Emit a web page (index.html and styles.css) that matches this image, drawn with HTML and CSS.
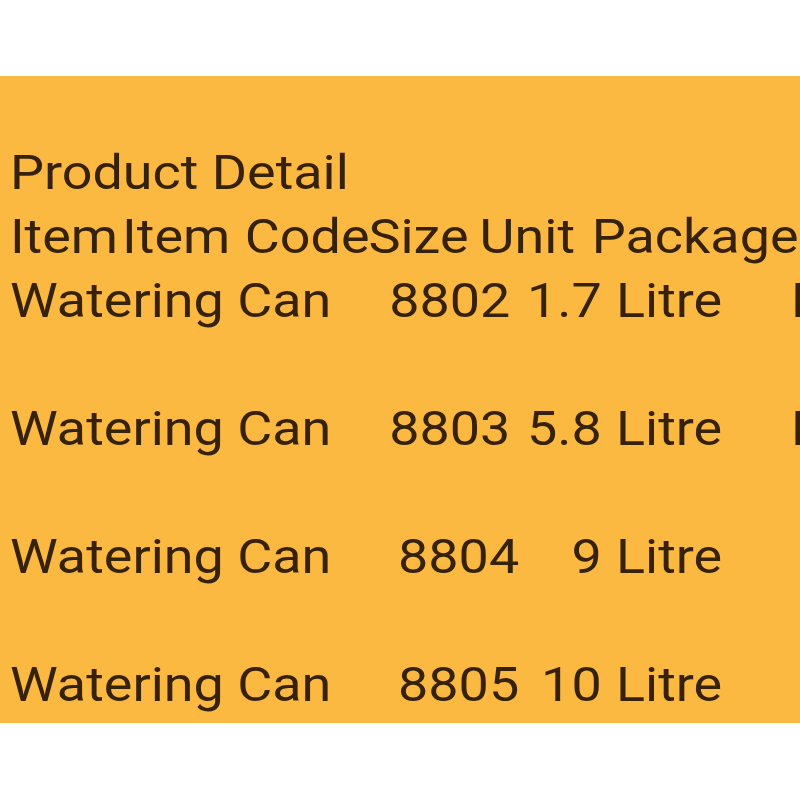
FILE: index.html
```html
<!DOCTYPE html>
<html>
<head>
<meta charset="utf-8">
<link rel="stylesheet" href="styles.css">
</head>
<body>
<div class="panel">
  <div class="content">
    <div class="title">Product Detail</div>
    <div class="head">
      <span>Item</span><span class="h-code">Item Code</span><span>Size</span><span>Unit</span><span>Package</span>
    </div>
    <div class="rows">
      <div class="row">
        <span class="c-item">Watering Can</span><span class="c-code c-code-narrow">8802</span><span class="c-size">1.7</span><span class="c-unit">Litre</span><span class="c-pack">Box</span>
      </div>
      <div class="row">
        <span class="c-item">Watering Can</span><span class="c-code c-code-narrow">8803</span><span class="c-size">5.8</span><span class="c-unit">Litre</span><span class="c-pack">Box</span>
      </div>
      <div class="row">
        <span class="c-item">Watering Can</span><span class="c-code">8804</span><span class="c-size">9</span><span class="c-unit">Litre</span><span class="c-pack"></span>
      </div>
      <div class="row">
        <span class="c-item">Watering Can</span><span class="c-code">8805</span><span class="c-size">10</span><span class="c-unit">Litre</span><span class="c-pack"></span>
      </div>
    </div>
  </div>
</div>
</body>
</html>
```

FILE: styles.css
```css
html, body {
  margin: 0;
  padding: 0;
  background: #ffffff;
}
body {
  width: 800px;
  height: 800px;
  overflow: hidden;
}
.panel {
  margin-top: 76px;
  height: 647px;
  background: #fcb942;
  color: #36220a;
  font-family: Roboto, "Liberation Sans", sans-serif;
  font-size: 49px;
  line-height: 64px;
  box-sizing: border-box;
  overflow: hidden;
  white-space: nowrap;
}
.content {
  padding: 65px 0 0 9px;
  transform: scaleX(1.1);
  transform-origin: 0 0;
}
.head {
  display: grid;
  grid-template-columns: 102px 224px 101px 102px 200px;
}
.h-code {
  word-spacing: 1px;
}
.row {
  display: grid;
  grid-template-columns: 320px 143px 75px 172px 40px;
  height: 128px;
  align-items: start;
}
.c-code {
  text-align: right;
}
.c-code-narrow {
  padding-right: 8px;
}
.c-size {
  text-align: right;
}
.c-unit {
  padding-left: 13px;
}
.c-pack {
  overflow: hidden;
}
```
